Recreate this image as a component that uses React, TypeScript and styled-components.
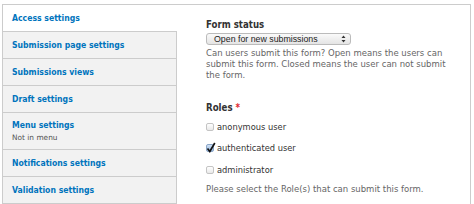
import React from 'react'
import styled, { createGlobalStyle } from 'styled-components'

const GlobalStyle = createGlobalStyle`
  html, body {
    margin: 0;
    padding: 0;
    background: #fff;
  }
  body {
    font-family: 'DejaVu Sans', Verdana, sans-serif;
    color: #333;
  }
`

const Wrapper = styled.div`
  display: flex;
  margin: 4px 3px 0 2px;
  border-top: 1px solid #ccc;
  border-left: 1px solid #ccc;
  border-right: 1px solid #ccc;
  height: 200px;
  box-sizing: border-box;
  overflow: hidden;
`

const TabList = styled.ul`
  list-style: none;
  margin: 0;
  padding: 0;
  width: 173px;
  flex-shrink: 0;
  background: #f2f2f2;
  border-right: 1px solid #ccc;
`

const Tab = styled.li<{ $active?: boolean }>`
  display: flex;
  flex-direction: column;
  justify-content: center;
  min-height: 27px;
  padding: 7px 9px;
  box-sizing: border-box;
  border-bottom: 1px solid #ccc;
  background: ${({ $active }) => ($active ? '#fff' : '#f2f2f2')};
  margin-right: ${({ $active }) => ($active ? '-1px' : '0')};
`

const TabTitle = styled.a`
  font-family: 'DejaVu Sans Condensed', 'DejaVu Sans', sans-serif;
  font-size: 8.6px;
  font-weight: bold;
  color: #0074bd;
  text-decoration: none;
`

const TabSummary = styled.span`
  font-size: 7.4px;
  color: #555;
  margin-top: 3px;
`

const Panel = styled.div`
  flex: 1;
  padding: 14px 20px 0 29px;
`

const Field = styled.div`
  margin-bottom: 21px;
`

const Label = styled.label`
  display: block;
  font-family: 'DejaVu Sans Condensed', 'DejaVu Sans', sans-serif;
  font-size: 9.6px;
  font-weight: bold;
  color: #333;
  margin-bottom: 3px;
`

const Required = styled.span`
  color: #e0262f;
`

const Select = styled.div`
  display: flex;
  align-items: center;
  justify-content: space-between;
  width: 145px;
  height: 12px;
  box-sizing: border-box;
  padding: 0 4px 0 7px;
  border: 1px solid #bbb;
  border-radius: 3px;
  background: linear-gradient(#fafafa, #e4e4e4);
  font-family: 'Liberation Sans', Arial, sans-serif;
  font-size: 8.8px;
  color: #222;
`

const Arrows = styled.svg`
  display: block;
`

const Description = styled.div`
  font-size: 8.5px;
  line-height: 11px;
  color: #666;
  margin-top: 3px;
`

const Option = styled.div`
  display: flex;
  align-items: center;
  gap: 3px;
  height: 21.5px;
  font-size: 8.3px;
  color: #333;
`

const Box = styled.span<{ $checked?: boolean }>`
  position: relative;
  width: 8px;
  height: 8px;
  flex-shrink: 0;
  box-sizing: border-box;
  border: 1px solid ${({ $checked }) => ($checked ? '#8aa6c8' : '#c4c4c4')};
  border-radius: 2px;
  background: ${({ $checked }) => ($checked ? 'linear-gradient(#cfe0f4, #9bbbe0)' : 'linear-gradient(#fff, #e9e9e9)')};
`

const Check = styled.svg`
  position: absolute;
  left: -1px;
  top: -3px;
`

function Checkbox({ checked, label }: { checked?: boolean; label: string }) {
  return (
    <Option>
      <Box $checked={checked}>
        {checked && (
          <Check width="10" height="11" viewBox="0 0 10 11">
            <path d="M1.5 6.5 L3.8 9.5 L8.8 1" fill="none" stroke="#111" strokeWidth="1.7" />
          </Check>
        )}
      </Box>
      {label}
    </Option>
  )
}

export default function App() {
  const tabs = [
    { title: 'Access settings', active: true },
    { title: 'Submission page settings' },
    { title: 'Submissions views' },
    { title: 'Draft settings' },
    { title: 'Menu settings', summary: 'Not in menu' },
    { title: 'Notifications settings' },
    { title: 'Validation settings' },
  ]
  return (
    <>
      <GlobalStyle />
      <Wrapper>
        <TabList>
          {tabs.map((t) => (
            <Tab key={t.title} $active={t.active}>
              <TabTitle href="#">{t.title}</TabTitle>
              {t.summary && <TabSummary>{t.summary}</TabSummary>}
            </Tab>
          ))}
        </TabList>
        <Panel>
          <Field>
            <Label>Form status</Label>
            <Select>
              Open for new submissions
              <Arrows width="5" height="8" viewBox="0 0 5 8">
                <path d="M0.5 3 L2.5 0.5 L4.5 3 Z M0.5 5 L2.5 7.5 L4.5 5 Z" fill="#333" />
              </Arrows>
            </Select>
            <Description>
              Can users submit this form? Open means the users can submit this form. Closed means the user can not submit
              the form.
            </Description>
          </Field>
          <Field>
            <Label>
              Roles <Required>*</Required>
            </Label>
            <Checkbox label="anonymous user" />
            <Checkbox checked label="authenticated user" />
            <Checkbox label="administrator" />
            <Description>Please select the Role(s) that can submit this form.</Description>
          </Field>
        </Panel>
      </Wrapper>
    </>
  )
}
